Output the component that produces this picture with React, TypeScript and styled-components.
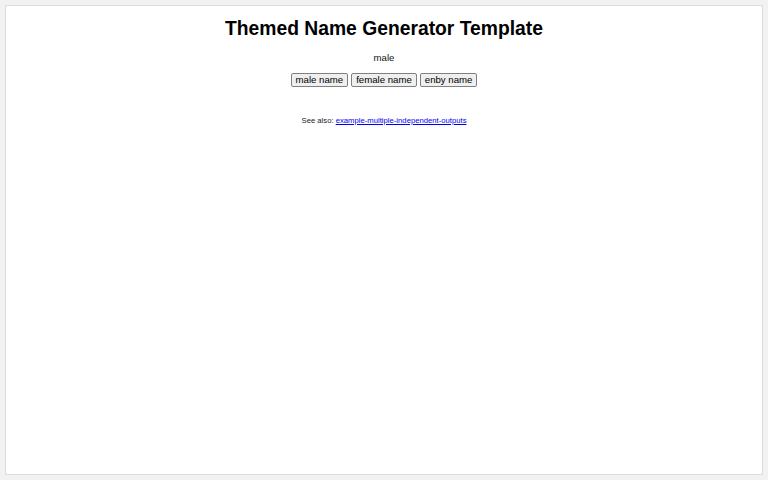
import React, { useState } from 'react';
import styled, { createGlobalStyle } from 'styled-components';

const GlobalStyle = createGlobalStyle`
  html, body {
    margin: 0;
    padding: 0;
    background: #f2f2f2;
    font-family: "Liberation Sans", Arial, sans-serif;
  }
`;

const Page = styled.div`
  padding: 5px;
  height: 480px;
  box-sizing: border-box;
`;

const Panel = styled.main`
  height: 470px;
  box-sizing: border-box;
  background: #ffffff;
  border: 1px solid #dcdcdc;
  display: flex;
  flex-direction: column;
  align-items: center;
  padding-top: 13px;
`;

const Title = styled.h1`
  margin: 0;
  font-size: 19.3px;
  font-weight: bold;
  color: #000;
  line-height: 20px;
`;

const Output = styled.div`
  margin-top: 13px;
  font-size: 9.65px;
  line-height: 12px;
  color: #111;
`;

const ButtonRow = styled.div`
  margin-top: 9px;
  display: flex;
  gap: 3px;
`;

const GenButton = styled.button`
  font-family: "Liberation Sans", Arial, sans-serif;
  font-size: 9.65px;
  line-height: 12px;
  padding: 0 4px;
  height: 14px;
  background: #efefef;
  color: #000;
  border: 1px solid #808080;
  border-radius: 2px;
  cursor: pointer;
`;

const SeeAlso = styled.p`
  margin: 29px 0 0;
  font-size: 7.7px;
  line-height: 10px;
  color: #222;
`;

const Link = styled.a`
  color: #0000ee;
`;

const names: Record<string, string> = {
  'male name': 'male',
  'female name': 'female',
  'enby name': 'enby',
};

export default function App() {
  const [result, setResult] = useState('male');

  return (
    <>
      <GlobalStyle />
      <Page>
        <Panel>
          <Title>Themed Name Generator Template</Title>
          <Output>{result}</Output>
          <ButtonRow>
            {Object.keys(names).map((label) => (
              <GenButton key={label} onClick={() => setResult(names[label])}>
                {label}
              </GenButton>
            ))}
          </ButtonRow>
          <SeeAlso>
            See also: <Link href="#">example-multiple-independent-outputs</Link>
          </SeeAlso>
        </Panel>
      </Page>
    </>
  );
}
